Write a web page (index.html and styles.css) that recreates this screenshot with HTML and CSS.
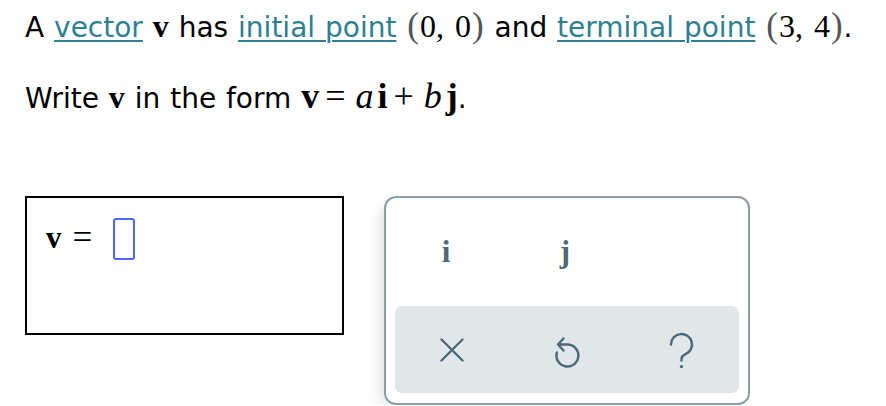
FILE: index.html
```html
<!DOCTYPE html>
<html>
<head>
<meta charset="utf-8">
<link rel="stylesheet" href="styles.css">
</head>
<body>
<div class="page">
  <p class="q line1">A <a class="lnk">vector</a> <span class="mb">v</span> has <a class="lnk">initial point</a> <span class="m"><span class="par">(</span>0,<span class="sp"></span>0<span class="par">)</span></span> and <a class="lnk">terminal point</a> <span class="m"><span class="par">(</span>3,<span class="sp"></span>4<span class="par">)</span></span>.</p>
  <p class="q line2">Write <span class="mb">v</span> in the form <span class="m m2"><span class="mb">v</span><span class="op">=</span><i>a</i><span class="mb">i</span><span class="op">+</span><i>b</i><span class="mb">j</span></span>.</p>
  <div class="row">
    <div class="answer">
      <span class="mb">v</span><span class="eq">=</span><span class="slot"></span>
    </div>
    <div class="keypad">
      <div class="keys">
        <span class="key">i</span>
        <span class="key">j</span>
      </div>
      <div class="tools">
        <span class="tool">
          <svg width="24" height="24" viewBox="0 0 24 24"><path d="M1.5 1.5 L22.5 22.5 M22.5 1.5 L1.5 22.5" stroke="#4b6a77" stroke-width="2.4" stroke-linecap="round" fill="none"/></svg>
        </span>
        <span class="tool">
          <svg width="36" height="40" viewBox="0 0 36 40"><path d="M14.5 8.5 L9 14.5 L14.5 20.5 M9 14.5 L19 14.5 A11 11 0 1 1 7.8 22.5" stroke="#4b6a77" stroke-width="2.4" stroke-linecap="round" stroke-linejoin="round" fill="none"/></svg>
        </span>
        <span class="tool">
          <svg width="34" height="44" viewBox="0 0 34 44"><path d="M6 16.5 A10.5 10.5 0 1 1 20.5 26.2 C18 27.3 16.5 28.6 16.5 31 L16.5 32.5" stroke="#4b6a77" stroke-width="2.4" stroke-linecap="round" fill="none"/><circle cx="16.5" cy="38.6" r="1.7" fill="#4b6a77"/></svg>
        </span>
      </div>
    </div>
  </div>
</div>
</body>
</html>
```
FILE: styles.css
```css
html, body {
  margin: 0;
  padding: 0;
  background: #ffffff;
}
.page {
  padding: 8px 0 0 25px;
  font-family: "DejaVu Sans", Verdana, sans-serif;
  color: #000;
}
.q {
  margin: 0;
  font-size: 28px;
  line-height: 36px;
  white-space: nowrap;
  word-spacing: 1px;
}
.line2 {
  margin-top: 32px;
}
.lnk {
  color: #2f7f93;
  text-decoration: underline;
  text-decoration-thickness: 2px;
  text-underline-offset: 3px;
}
.m {
  font-family: "Liberation Serif", "Times New Roman", serif;
  font-size: 32px;
}
.mb {
  font-family: "Liberation Serif", "Times New Roman", serif;
  font-weight: bold;
  font-size: 32px;
}
.m2 {
  font-size: 36px;
}
.m2 .mb {
  font-size: 36px;
}
.m i {
  font-style: italic;
  padding: 0 4px;
}
.sp {
  display: inline-block;
  width: 11px;
}
.par {
  color: #555;
  font-size: 35px;
  margin: 0 1px;
}
.op {
  padding: 0 6px;
}
.row {
  display: flex;
  align-items: flex-start;
  gap: 40px;
  margin-top: 79px;
}
.answer {
  box-sizing: border-box;
  width: 319px;
  height: 139px;
  border: 2px solid #000;
  display: flex;
  align-items: flex-start;
  padding: 20px 0 0 19px;
  font-family: "Liberation Serif", "Times New Roman", serif;
  font-size: 31px;
}
.answer .mb {
  font-size: 31px;
  line-height: 40px;
}
.eq {
  font-size: 35px;
  line-height: 40px;
  margin-left: 11px;
}
.slot {
  box-sizing: border-box;
  width: 22px;
  height: 42px;
  border: 2px solid #4a67f6;
  border-radius: 3px;
  margin-left: 21px;
}
.keypad {
  box-sizing: border-box;
  width: 366px;
  height: 209px;
  border: 2px solid #8a9fa7;
  border-radius: 12px;
  box-shadow: -9px 6px 12px -4px rgba(0, 0, 0, 0.10);
  padding: 0 9px 10px 9px;
  display: flex;
  flex-direction: column;
  justify-content: space-between;
}
.keys {
  display: grid;
  grid-template-columns: 120px 118px;
  margin-left: -9px;
  padding-top: 34px;
}
.key {
  text-align: center;
  font-family: "Liberation Serif", "Times New Roman", serif;
  font-weight: bold;
  font-size: 31px;
  line-height: 40px;
  color: #4b6a77;
}
.tools {
  height: 87px;
  background: #e1e6e9;
  border-radius: 7px;
  display: grid;
  grid-template-columns: 1fr 1fr 1fr;
  align-items: center;
  justify-items: center;
}
.tool {
  display: flex;
  align-items: center;
  justify-content: center;
}
.tool svg {
  display: block;
}
```
